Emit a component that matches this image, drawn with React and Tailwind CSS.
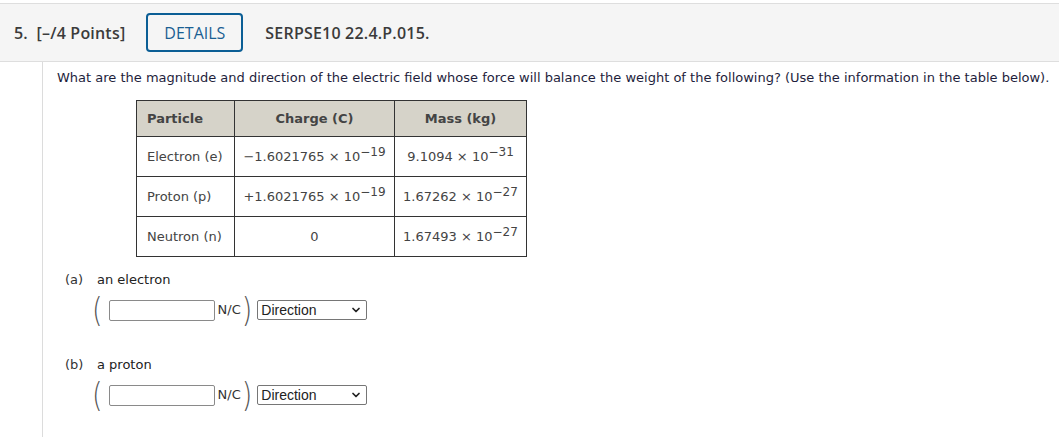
import { ChevronDown } from "lucide-react";

const rows = [
  { name: "Electron (e)", charge: ["\u22121.6021765", "\u221219"], mass: ["9.1094", "\u221231"] },
  { name: "Proton (p)", charge: ["+1.6021765", "\u221219"], mass: ["1.67262", "\u221227"] },
  { name: "Neutron (n)", charge: null, mass: ["1.67493", "\u221227"] },
];

const Sci = ({ v }) => (
  <span>
    {v[0]} &times; 10
    <sup className="text-[12px] relative top-[-5px]">{v[1]}</sup>
  </span>
);

const AnswerRow = () => (
  <div className="flex items-center h-[28px] ml-[35px]">
    <span className="text-[27px] font-extralight text-[#555] leading-none mr-[6px] scale-y-125">(</span>
    <input
      type="text"
      className="w-[106px] h-[21px] border border-[#8a8a8a] rounded-[2px] bg-white"
    />
    <span className="text-[13px] text-[#333] ml-[3px]">N/C</span>
    <span className="text-[27px] font-extralight text-[#555] leading-none ml-[1px] scale-y-125">)</span>
    <div className="ml-[5px] w-[110px] h-[20px] border border-[#767676] rounded-[2px] bg-white flex items-center justify-between pl-[3px] pr-[4px] font-['Liberation_Sans',Arial,sans-serif] text-[14px] text-[#222]">
      <span>Direction</span>
      <ChevronDown size={12} strokeWidth={3.5} className="text-[#222]" />
    </div>
  </div>
);

const App = () => {
  return (
    <div className="w-[1059px] h-[437px] bg-white overflow-hidden font-['DejaVu_Sans',Verdana,sans-serif]">
      {/* Header */}
      <div className="mt-[3px] h-[59px] bg-[#f5f5f5] border-y border-[#dedede] flex items-center font-['Open_Sans',sans-serif] font-semibold text-[16px] text-[#3b3b3b]">
        <span className="ml-[14px]">5.</span>
        <span className="ml-[9px] tracking-[0.2px]">[&ndash;/4 Points]</span>
        <div className="ml-[21px] w-[97px] h-[39px] border-2 border-[#0b5e95] rounded-[4px] flex items-center justify-center text-[#1a5f93] font-normal text-[16px]">
          DETAILS
        </div>
        <span className="ml-[22px] tracking-[0.2px]">SERPSE10 22.4.P.015.</span>
      </div>

      {/* Body */}
      <div className="ml-[42px] border-l border-[#dcdcdc] h-[375px] pl-[14px] text-[13px] text-[#1e1e3c]">
        <p className="pt-[8px] leading-[16px]">
          What are the magnitude and direction of the electric field whose force will balance the weight of the following? (Use the information in the table below).
        </p>

        <table className="ml-[79px] mt-[14px] border-collapse border border-[#333] text-[#444]">
          <thead>
            <tr className="bg-[#d6d3c9] h-[36px] font-bold">
              <th className="border border-[#333] w-[98px] text-left pl-[10px]">Particle</th>
              <th className="border border-[#333] w-[160px]">Charge (C)</th>
              <th className="border border-[#333] w-[132px]">Mass (kg)</th>
            </tr>
          </thead>
          <tbody>
            {rows.map((r) => (
              <tr key={r.name} className="h-[40px]">
                <td className="border border-[#333] pl-[10px]">{r.name}</td>
                <td className="border border-[#333] text-center">
                  {r.charge ? <Sci v={r.charge} /> : "0"}
                </td>
                <td className="border border-[#333] text-center">
                  <Sci v={r.mass} />
                </td>
              </tr>
            ))}
          </tbody>
        </table>

        <div className="mt-[13px] text-[#333]">
          <div className="flex h-[16px] ml-[8px]">
            <span className="w-[32px]">(a)</span>
            <span className="text-[#222]">an electron</span>
          </div>
          <div className="mt-[10px]">
            <AnswerRow />
          </div>
        </div>

        <div className="mt-[31px] text-[#333]">
          <div className="flex h-[16px] ml-[8px]">
            <span className="w-[32px]">(b)</span>
            <span className="text-[#222]">a proton</span>
          </div>
          <div className="mt-[10px]">
            <AnswerRow />
          </div>
        </div>
      </div>
    </div>
  );
};

export default App;
